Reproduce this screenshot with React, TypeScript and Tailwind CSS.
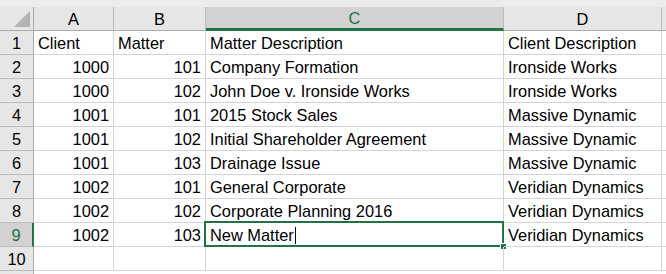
import React from 'react';

const cols = ['A', 'B', 'C', 'D'];
const widths = ['w-[80px]', 'w-[92px]', 'w-[298px]', 'w-[158px]'];

const rows: (string | number)[][] = [
  ['Client', 'Matter', 'Matter Description', 'Client Description'],
  [1000, 101, 'Company Formation', 'Ironside Works'],
  [1000, 102, 'John Doe v. Ironside Works', 'Ironside Works'],
  [1001, 101, '2015 Stock Sales', 'Massive Dynamic'],
  [1001, 102, 'Initial Shareholder Agreement', 'Massive Dynamic'],
  [1001, 103, 'Drainage Issue', 'Massive Dynamic'],
  [1002, 101, 'General Corporate', 'Veridian Dynamics'],
  [1002, 102, 'Corporate Planning 2016', 'Veridian Dynamics'],
  [1002, 103, 'New Matter', 'Veridian Dynamics'],
  ['', '', '', ''],
];

const SELECTED_ROW = 9;

export default function App() {
  return (
    <div className="w-[666px] h-[274px] overflow-hidden bg-white text-black font-['Liberation_Sans',Arial,sans-serif] text-[16.4px] leading-none select-none">
      <div className="h-[7px] bg-[#ececec]" />

      {/* column headers */}
      <div className="flex h-[24px]">
        <div className="w-[34px] shrink-0 bg-[#e6e6e6] border-r border-b border-[#ababab] relative overflow-hidden">
          <div className="absolute right-[3px] bottom-[3px] w-0 h-0 border-l-[16px] border-l-transparent border-b-[16px] border-b-[#b4b4b4]" />
        </div>
        {cols.map((c, i) =>
          c === 'C' ? (
            <div
              key={c}
              className={`${widths[i]} shrink-0 bg-[#d2d2d2] border-r border-[#bcbcbc] border-b-[3px] border-b-[#217346] flex items-center justify-center pt-[2px] text-[#217346]`}
            >
              {c}
            </div>
          ) : (
            <div
              key={c}
              className={`${widths[i]} shrink-0 bg-[#e6e6e6] border-r border-[#bcbcbc] border-b border-b-[#ababab] flex items-center justify-center pt-[2px]`}
            >
              {c}
            </div>
          )
        )}
        <div className="flex-1 bg-[#e6e6e6] border-b border-[#ababab]" />
      </div>

      {/* rows */}
      {rows.map((r, ri) => {
        const n = ri + 1;
        const sel = n === SELECTED_ROW;
        return (
          <div key={n} className="flex h-[24px]">
            <div
              className={
                sel
                  ? 'w-[34px] shrink-0 bg-[#d2d2d2] border-r-[2px] border-[#217346] border-b border-b-[#bcbcbc] flex items-center justify-center pt-[2px] text-[#217346]'
                  : 'w-[34px] shrink-0 bg-[#e6e6e6] border-r border-[#ababab] border-b border-b-[#bcbcbc] flex items-center justify-center pt-[2px]'
              }
            >
              {n}
            </div>
            {r.map((v, ci) => {
              const num = typeof v === 'number';
              const isSel = sel && ci === 2;
              return (
                <div
                  key={ci}
                  className={`${widths[ci]} shrink-0 border-r border-b border-[#d4d4d4] flex items-center pt-[2px] px-[4px] whitespace-nowrap relative ${
                    num ? 'justify-end' : 'justify-start'
                  }`}
                >
                  {v}
                  {isSel && (
                    <>
                      <span className="inline-block w-px h-[17px] bg-black ml-px" />
                      <div className="absolute -left-[2px] -top-[2px] -right-px -bottom-px border-[2px] border-[#217346]" />
                      <div className="absolute -right-[4px] -bottom-[4px] w-[7px] h-[7px] bg-[#217346] border border-white" />
                    </>
                  )}
                </div>
              );
            })}
            <div className="flex-1 border-b border-[#d4d4d4]" />
          </div>
        );
      })}
      <div className="flex h-[24px]">
        <div className="w-[34px] shrink-0 bg-[#e6e6e6] border-r border-[#ababab]" />
      </div>
    </div>
  );
}
